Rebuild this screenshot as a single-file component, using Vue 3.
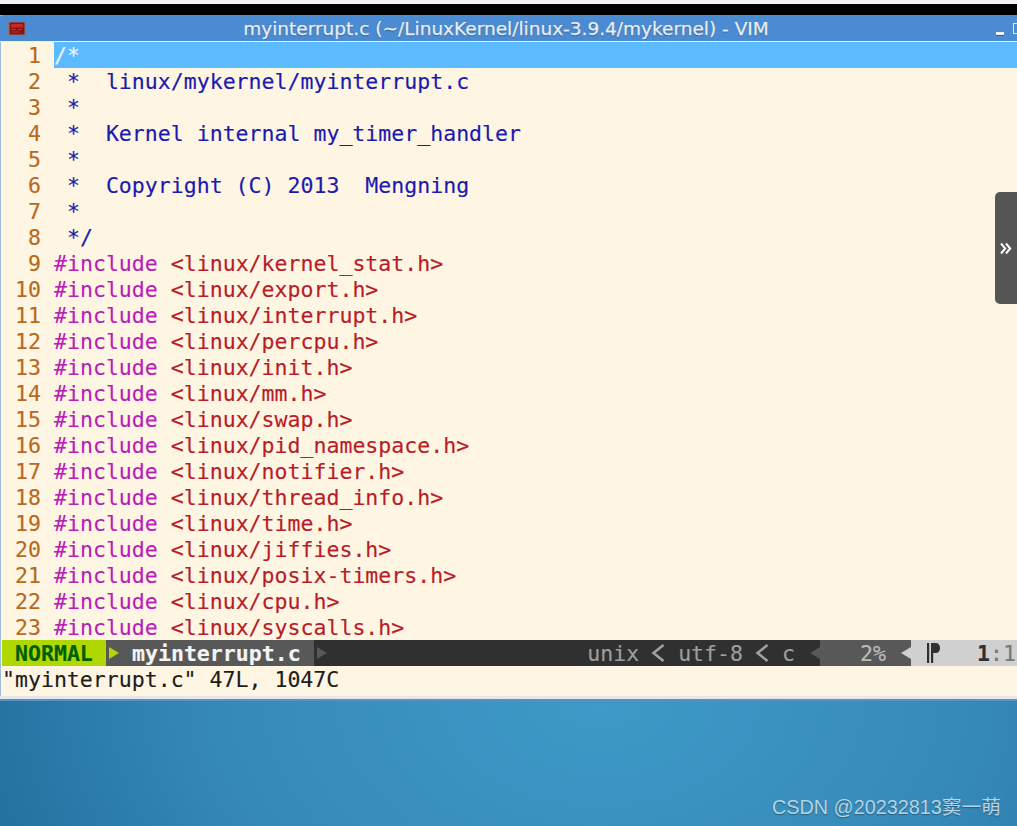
<script setup>
const head = [
  { n: 2, t: ' *  linux/mykernel/myinterrupt.c' },
  { n: 3, t: ' *' },
  { n: 4, t: ' *  Kernel internal my_timer_handler' },
  { n: 5, t: ' *' },
  { n: 6, t: ' *  Copyright (C) 2013  Mengning' },
  { n: 7, t: ' *' },
  { n: 8, t: ' */' }
]
const names = ['kernel_stat', 'export', 'interrupt', 'percpu', 'init', 'mm', 'swap', 'pid_namespace', 'notifier', 'thread_info', 'time', 'jiffies', 'posix-timers', 'cpu', 'syscalls']
const includes = names.map((name, i) => ({ n: i + 9, t: `<linux/${name}.h>` }))
</script>

<template>
  <div class="page">
    <div class="topstrip"></div>
    <div class="blackbar"></div>
    <div class="window">
      <header class="titlebar">
        <svg class="appicon" width="18" height="15" viewBox="0 0 18 15">
          <rect x="0" y="0" width="18" height="15" rx="2" fill="#857878" />
          <rect x="1.500" y="1.500" width="15" height="12" fill="#8a1212" />
          <rect x="3" y="3" width="12" height="3.500" fill="#cc2626" />
          <path d="M3 8.500h5M10 8.500h4M4 11h7" stroke="#c23434" stroke-width="1" />
        </svg>
        <div class="title">myinterrupt.c (~/LinuxKernel/linux-3.9.4/mykernel) - VIM</div>
        <div class="winbtns">
          <span class="minbtn"></span>
          <span class="maxbtn"></span>
        </div>
      </header>
      <main class="editor">
        <div class="row current"><span class="num">1</span><span class="cur">/*</span></div>
        <div v-for="l in head" :key="l.n" class="row"><span class="num">{{ l.n }}</span><span class="comment">{{ l.t }}</span></div>
        <div v-for="l in includes" :key="l.n" class="row"><span class="num">{{ l.n }}</span><span class="pre">#include </span><span class="str">{{ l.t }}</span></div>
        <div class="status">
          <div class="seg-mode">NORMAL</div>
          <div class="seg-file">
            <svg class="tri" width="12" height="14" viewBox="0 0 12 14"><path d="M1 1l10 6-10 6z" fill="#afd700" /></svg>
            <span class="fname">myinterrupt.c</span>
          </div>
          <div class="seg-dark">
            <svg class="tri-start" width="12" height="14" viewBox="0 0 12 14"><path d="M1 1l10 6-10 6z" fill="#585858" /></svg>
            <span class="grow"></span>
            <span>unix</span>
            <svg class="chev" width="14" height="18" viewBox="0 0 14 18"><path d="M12.500 1L2.500 9l10 8" fill="none" stroke="#a0a0a0" stroke-width="2.600" /></svg>
            <span>utf-8</span>
            <svg class="chev" width="14" height="18" viewBox="0 0 14 18"><path d="M12.500 1L2.500 9l10 8" fill="none" stroke="#a0a0a0" stroke-width="2.600" /></svg>
            <span>c</span>
            <svg class="tri-end" width="12" height="14" viewBox="0 0 12 14"><path d="M11 1L1 7l10 6z" fill="#585858" /></svg>
          </div>
          <div class="seg-pct">
            <span>2%</span>
            <svg class="tri-pct" width="12" height="14" viewBox="0 0 12 14"><path d="M11 1L1 7l10 6z" fill="#d0d0d0" /></svg>
          </div>
          <div class="seg-pos">
            <svg class="ln" width="16" height="22" viewBox="0 0 16 22"><path d="M2 1h2.200v20H2zM6 1h4.500c3 0 4.500 2 4.500 5s-1.500 5-4.500 5H8.200v10H6z" fill="#303030" /></svg>
            <b class="line">1</b><span class="colon">:</span><span class="col">1</span>
          </div>
        </div>
        <div class="cmd">"myinterrupt.c" 47L, 1047C</div>
      </main>
      <div class="winfoot"></div>
    </div>
    <div class="desktop">
      <div class="mark">CSDN @20232813窦一萌</div>
    </div>
    <aside class="panel">
      <svg width="12" height="13" viewBox="0 0 12 13"><path d="M1 1.500l4.200 5-4.200 5M6 1.500l4.200 5-4.200 5" fill="none" stroke="#fff" stroke-width="2" /></svg>
    </aside>
  </div>
</template>

<style>
html, body { margin: 0; padding: 0; background: #2f87b5; }
</style>

<style scoped>
.page {
  position: relative;
  width: 1017px;
  height: 826px;
  overflow: hidden;
  display: flex;
  flex-direction: column;
  font-family: "DejaVu Sans Mono", monospace;
}
.topstrip { height: 4px; background: #f2f2f2; }
.blackbar { height: 11px; background: #000; }
.window {
  background: #fff5e3;
  border-left: 1px solid #9dbde0;
  padding-left: 1px;
  height: 686px;
  box-sizing: border-box;
  display: flex;
  flex-direction: column;
  flex: none;
}
.titlebar {
  height: 26px;
  flex: none;
  margin-left: -2px;
  background: #4a8bd1;
  border-bottom: 1px solid #e8f1fa;
  border-radius: 3px 0 0 0;
  display: flex;
  align-items: center;
  position: relative;
}
.appicon { margin-left: 8px; filter: blur(.4px); }
.title {
  position: absolute;
  left: 0;
  right: 5px;
  text-align: center;
  color: #e9eef3;
  font-family: "DejaVu Sans", sans-serif;
  font-size: 18.5px;
  -webkit-text-stroke: .25px #e9eef3;
  text-shadow: 0 1px 1px rgba(30, 60, 100, .6);
}
.winbtns {
  margin-left: auto;
  display: flex;
  align-items: flex-end;
  gap: 9px;
  height: 16px;
}
.minbtn { width: 8px; height: 3px; background: #eef3f8; margin-bottom: 1px; box-shadow: 0 1px 0 #2f5f94; }
.maxbtn { width: 3px; height: 9px; border: 1px solid #e0e8f0; border-right: 0; margin-bottom: 2px; }
.editor {
  font-size: 21.56px;
  line-height: 28px;
  white-space: pre;
  flex: 1;
  -webkit-text-stroke: .15px currentColor;
}
.row { height: 26px; display: flex; white-space: pre; }
.num {
  width: 39px;
  margin-right: 13px;
  text-align: right;
  color: #b8691c;
  flex: none;
}
.current { background: linear-gradient(to right, transparent 52px, #5cbaff 52px); }
.cur { color: #e9f5ff; }
.comment { color: #1a1ab0; }
.pre { color: #b81eb8; }
.str { color: #b81c28; }
.status {
  height: 26px;
  display: flex;
  background: #303030;
  line-height: 26px;
  overflow: hidden;
}
.status span, .status b { padding-top: 2px; }
.seg-mode {
  width: 104px;
  flex: none;
  box-sizing: border-box;
  padding: 1px 0 0 13px;
  background: #afd700;
  color: #005f00;
  font-weight: 700;
}
.seg-file {
  width: 208px;
  flex: none;
  display: flex;
  align-items: center;
  background: #585858;
  color: #f4f4f4;
  font-weight: 700;
}
.tri { margin-left: 2px; margin-right: 12px; }
.seg-dark {
  flex: 1;
  display: flex;
  align-items: center;
  color: #9e9e9e;
  min-width: 0;
}
.tri-start { margin-left: 2px; }
.grow { flex: 1; }
.chev { margin: 0 13px 0 12px; }
.tri-end { margin-left: 14px; margin-right: -1px; }
.seg-pct {
  width: 91px;
  flex: none;
  box-sizing: border-box;
  display: flex;
  align-items: center;
  justify-content: flex-end;
  background: #585858;
  color: #bcbcbc;
}
.tri-pct { margin-left: 14px; margin-right: -1px; }
.seg-pos {
  width: 106px;
  flex: none;
  box-sizing: border-box;
  display: flex;
  align-items: center;
  background: #d0d0d0;
  color: #303030;
  padding-left: 14px;
}
.ln { margin-right: 36px; }
.line { font-weight: 700; }
.colon, .col { color: #767676; }
.cmd {
  height: 26px;
  color: #1c1c1c;
}
.winfoot {
  height: 3px;
  margin-left: -2px;
  background: #e4e8ea;
  border-bottom: 2px solid #5c8fc4;
  flex: none;
}
.desktop {
  flex: 1;
  position: relative;
  background: radial-gradient(ellipse 640px 420px at 600px 0, #3e9ac8 0%, #3589b8 60%, #22719f 100%);
}
.mark {
  position: absolute;
  right: 16px;
  bottom: 8px;
  color: #b5d3e2;
  font-family: "Liberation Sans", "Noto Sans CJK SC", sans-serif;
  font-size: 19.800px;
  line-height: 22px;
  text-shadow: 0 1px 1px rgba(20, 50, 70, .5);
}
.panel {
  position: absolute;
  left: 995px;
  top: 192px;
  width: 22px;
  height: 112px;
  background: #565656;
  border-radius: 5px 0 0 5px;
  display: flex;
  align-items: center;
  justify-content: center;
}
</style>
